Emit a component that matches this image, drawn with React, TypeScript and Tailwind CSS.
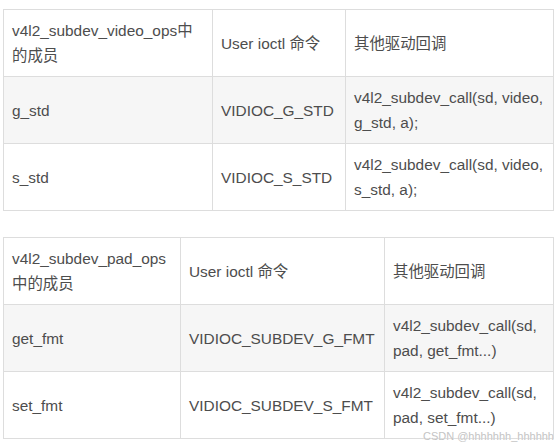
const font = "font-['Liberation_Sans','Noto_Sans_CJK_SC',sans-serif]";

type Table = {
  cols: number[];
  head: string[];
  rows: string[][];
};

const tables: Table[] = [
  {
    cols: [209, 133, 208],
    head: ["v4l2_subdev_video_ops中的成员", "User ioctl 命令", "其他驱动回调"],
    rows: [
      ["g_std", "VIDIOC_G_STD", "v4l2_subdev_call(sd, video, g_std, a);"],
      ["s_std", "VIDIOC_S_STD", "v4l2_subdev_call(sd, video, s_std, a);"],
    ],
  },
  {
    cols: [177, 204, 169],
    head: ["v4l2_subdev_pad_ops中的成员", "User ioctl 命令", "其他驱动回调"],
    rows: [
      ["get_fmt", "VIDIOC_SUBDEV_G_FMT", "v4l2_subdev_call(sd, pad, get_fmt...)"],
      ["set_fmt", "VIDIOC_SUBDEV_S_FMT", "v4l2_subdev_call(sd, pad, set_fmt...)"],
    ],
  },
];

function OpsTable({ t }: { t: Table }) {
  return (
    <table className="w-[550px] table-fixed border-collapse">
      <colgroup>
        {t.cols.map((w, i) => (
          <col key={i} style={{ width: w }} />
        ))}
      </colgroup>
      <tbody>
        <tr className="bg-white">
          {t.head.map((h, i) => (
            <td key={i} className="h-[67px] border border-[#dddddd] px-2 py-2 align-middle leading-[25px] break-words">
              {h}
            </td>
          ))}
        </tr>
        {t.rows.map((r, ri) => (
          <tr key={ri} className={ri % 2 === 0 ? "bg-[#f6f6f6]" : "bg-white"}>
            {r.map((c, ci) => (
              <td key={ci} className="h-[67px] border border-[#dddddd] px-2 py-2 align-middle leading-[25px] break-words">
                {c}
              </td>
            ))}
          </tr>
        ))}
      </tbody>
    </table>
  );
}

export default function App() {
  return (
    <div className={`relative h-[447px] w-[560px] bg-white text-[15.4px] text-[#4d4d4d] ${font}`}>
      <div className="flex flex-col gap-[26px] pl-[3px] pt-[9px]">
        {tables.map((t, i) => (
          <OpsTable key={i} t={t} />
        ))}
      </div>
      <div className="absolute right-[6px] top-[429px] text-[11px] leading-[14px] text-[#c4c4c4] [text-shadow:0_0_1px_white]">
        CSDN @hhhhhhh_hhhhhh
      </div>
    </div>
  );
}
